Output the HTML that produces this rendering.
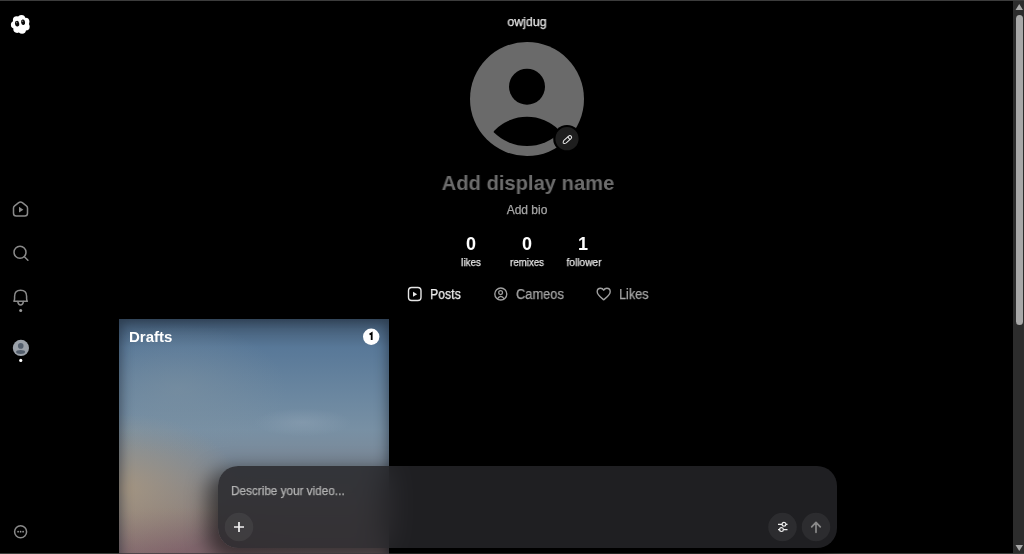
<!DOCTYPE html>
<html><head><meta charset="utf-8">
<style>
*{margin:0;padding:0;box-sizing:border-box}
html,body{width:1024px;height:554px;overflow:hidden;background:#000;font-family:"Liberation Sans",sans-serif;color:#ececec}
.abs{position:absolute}
#topline{left:0;top:0;width:1024px;height:1px;background:#3c3c3c}
#botline{left:0;top:553px;width:1024px;height:1px;background:#3a3d3a}
#sb{left:1013px;top:1px;width:11px;height:552px;background:#2c2c2c}
.t{position:absolute;white-space:nowrap;line-height:1;will-change:transform}
.c{transform:translateX(-50%)}
.rg{-webkit-text-stroke:0.25px currentColor}
</style></head><body>
<div class="abs" id="topline"></div>
<div class="abs" id="botline"></div>

<!-- scrollbar -->
<div class="abs" id="sb"></div>
<svg class="abs" style="left:1013px;top:0" width="11" height="554">
  <polygon points="2.5,10 10,10 6.25,4" fill="#a8a8a8"/>
  <rect x="3" y="15" width="7" height="310" rx="3.5" fill="#a8a8a8"/>
  <polygon points="2.5,545 10,545 6.25,551" fill="#a8a8a8"/>
</svg>

<!-- logo -->
<svg class="abs" style="left:0;top:0" width="40" height="40" viewBox="0 0 40 40">
  <g fill="#fff"><circle cx="20.5" cy="24.4" r="7.8"/><circle cx="21.51" cy="18.69" r="3.8"/><circle cx="25.59" cy="21.63" r="3.8"/><circle cx="25.84" cy="26.65" r="3.8"/><circle cx="22.07" cy="29.98" r="3.8"/><circle cx="17.11" cy="29.11" r="3.8"/><circle cx="14.71" cy="24.69" r="3.8"/><circle cx="16.66" cy="20.05" r="3.8"/></g>
  <ellipse cx="17.1" cy="23.7" rx="2.1" ry="2.85" fill="#0a0a0a" transform="rotate(-12 17.1 23.7)"/>
  <ellipse cx="23.1" cy="22.3" rx="2.0" ry="2.8" fill="#0a0a0a" transform="rotate(-12 23.1 22.3)"/>
  <circle cx="16.5" cy="22.6" r="0.8" fill="#777"/>
  <circle cx="22.5" cy="21.2" r="0.8" fill="#777"/>
</svg>
<!-- sidebar icons -->
<svg class="abs" style="left:0;top:190px" width="40" height="360" viewBox="0 190 40 360" fill="none" stroke="#8a8a8a" stroke-width="1.5" stroke-linecap="round" stroke-linejoin="round">
  <!-- home/play -->
  <path d="M18.7 202.7 Q20.5 201.3 22.3 202.7 L26.4 205.8 Q27.5 206.6 27.5 207.9 L27.5 213.2 Q27.5 216 24.7 216 L16.3 216 Q13.5 216 13.5 213.2 L13.5 207.9 Q13.5 206.6 14.6 205.8 Z"/>
  <path d="M19 206.8 L23.4 209.7 L19 212.6 Z" fill="#8a8a8a" stroke="none"/>
  <!-- search -->
  <circle cx="20" cy="252.3" r="6.0"/>
  <path d="M24.4 256.7 L27.9 260.2"/>
  <!-- bell -->
  <path d="M13.9 301.3 Q14.6 300.4 14.6 298.6 L14.6 296.3 Q14.6 290.3 20.6 290.3 Q26.6 290.3 26.6 296.3 L26.6 298.6 Q26.6 300.4 27.3 301.3 Z"/>
  <path d="M17.8 301.6 Q18.3 304.9 20.6 304.9 Q22.9 304.9 23.4 301.6"/>
  <circle cx="20.7" cy="310.6" r="1.5" fill="#999" stroke="none"/>
  <!-- more -->
  <circle cx="20.6" cy="531.7" r="6.0"/>
</svg>
<svg class="abs" style="left:0;top:330px" width="40" height="40" viewBox="0 330 40 40">
  <circle cx="20.9" cy="347.9" r="8.1" fill="#9aa0a8"/>
  <circle cx="20.75" cy="345.9" r="2.8" fill="#535e6c"/>
  <ellipse cx="20.6" cy="352" rx="4.5" ry="1.9" fill="#535e6c"/>
  <circle cx="20.75" cy="360.4" r="1.6" fill="#fff"/>
</svg>
<svg class="abs" style="left:0;top:520px" width="40" height="24" viewBox="0 520 40 24">
  <circle cx="18.1" cy="531.7" r="0.85" fill="#999"/><circle cx="20.6" cy="531.7" r="0.85" fill="#999"/><circle cx="23.1" cy="531.7" r="0.85" fill="#999"/>
</svg>

<!-- header -->
<div class="rg t c" style="left:527.2px;top:14.8px;font-size:13px;color:#e6e6e6;transform:translateX(-50%) scaleX(.95)">owjdug</div>

<!-- avatar -->
<svg class="abs" style="left:470.3px;top:42.4px" width="114" height="114" viewBox="-57 -57 114 114">
  <defs><clipPath id="inner"><circle cx="0" cy="0" r="47"/></clipPath></defs>
  <circle cx="0" cy="0" r="57" fill="#6a6a6a"/>
  <circle cx="0" cy="-12.3" r="18" fill="#000"/>
  <circle cx="0" cy="63.3" r="45.5" fill="#000" clip-path="url(#inner)"/>
</svg>
<!-- edit -->
<svg class="abs" style="left:550px;top:120px" width="34" height="36" viewBox="550 120 34 36">
  <circle cx="567" cy="138.7" r="13.8" fill="#000"/>
  <circle cx="567" cy="138.7" r="11.6" fill="#1e1e1e"/>
  <g transform="translate(563.3 143.2) rotate(-42)" fill="none" stroke="#eee" stroke-width="1" stroke-linejoin="round">
    <path d="M0 0 Q0.3 -1.2 2.4 -1.75 L8.8 -1.75 A1.75 1.75 0 0 1 8.8 1.75 L2.4 1.75 Q0.3 1.2 0 0 Z"/>
    <path d="M7.4 -1.75 V1.75"/>
  </g>
</svg>

<div class="t c" style="left:527.6px;top:172px;font-size:21px;font-weight:bold;color:#6c6c6c;transform:translateX(-50%) scaleX(.961)">Add display name</div>
<div class="rg t c" style="left:527px;top:204px;font-size:12px;color:#a6a6a6">Add bio</div>

<div class="t c" style="left:471px;top:235px;font-size:18px;font-weight:bold;color:#fff">0</div>
<div class="t c" style="left:527.3px;top:235px;font-size:18px;font-weight:bold;color:#fff">0</div>
<div class="t c" style="left:583px;top:235px;font-size:18px;font-weight:bold;color:#fff">1</div>
<div class="rg t c" style="left:471px;top:257px;font-size:11px;color:#e6e6e6;transform:translateX(-50%) scaleX(.9)">likes</div>
<div class="rg t c" style="left:527.3px;top:257px;font-size:11px;color:#e6e6e6;transform:translateX(-50%) scaleX(.88)">remixes</div>
<div class="rg t c" style="left:583.6px;top:257px;font-size:11px;color:#e6e6e6;transform:translateX(-50%) scaleX(.923)">follower</div>

<!-- tabs -->
<svg class="abs" style="left:400px;top:280px" width="260" height="30" viewBox="400 280 260 30" fill="none" stroke-width="1.4">
  <rect x="408.5" y="287.5" width="12.5" height="13" rx="3.2" stroke="#e6e6e6"/>
  <path d="M413 291.8 L417.2 294.3 L413 296.8Z" fill="#e6e6e6" stroke="none"/>
  <circle cx="500.8" cy="294" r="6.0" stroke="#a0a0a0" stroke-width="1.35"/>
  <circle cx="500.6" cy="292.6" r="1.9" stroke="#a0a0a0" stroke-width="1.25"/>
  <path d="M497.1 299.3 Q500.8 293.2 504.5 299.3" stroke="#a0a0a0" stroke-width="1.25"/>
  <path d="M603.7 299.8 C601.4 297.9 597.2 294.9 597.2 291.7 C597.2 289.6 598.7 288.2 600.6 288.2 C601.9 288.2 603 288.9 603.7 290.2 C604.4 288.9 605.5 288.2 606.8 288.2 C608.7 288.2 610.2 289.6 610.2 291.7 C610.2 294.9 606 297.9 603.7 299.8 Z" stroke="#a0a0a0" stroke-width="1.4" stroke-linejoin="round"/>
</svg>
<div class="rg t" style="left:429.7px;top:287px;font-size:14px;color:#ececec;transform-origin:0 0;transform:scaleX(.88)">Posts</div>
<div class="rg t" style="left:515.7px;top:287px;font-size:14px;color:#a5a5a5;transform-origin:0 0;transform:scaleX(.917)">Cameos</div>
<div class="rg t" style="left:619px;top:287px;font-size:14px;color:#a5a5a5;transform-origin:0 0;transform:scaleX(.9)">Likes</div>

<!-- drafts card -->
<div class="abs" id="card" style="left:119px;top:319px;width:270px;height:235px;overflow:hidden;background:#000">
  <div class="abs" style="left:0;top:0;width:270px;height:235px;
    background:
      radial-gradient(ellipse 18% 6% at 68% 44%, rgba(160,176,192,.3), rgba(160,176,192,0)),
      radial-gradient(ellipse 40% 28% at 22% 30%, rgba(125,145,160,.55), rgba(125,145,160,0)),
      radial-gradient(ellipse 45% 32% at 0% 72%, rgba(170,152,128,.85), rgba(170,152,128,0)),
      radial-gradient(ellipse 50% 20% at 20% 100%, rgba(128,98,106,.9), rgba(128,98,106,0)),
      linear-gradient(180deg,#3f566e 0%,#587898 12%,#6b87a0 33%,#7890a4 47%,#7b8896 62%,#857c7c 82%,#7e6c70 100%)"></div>
  <div class="abs" style="left:0;top:0;width:270px;height:260px;box-shadow:inset 0 0 11px 3px rgba(25,35,50,.5)"></div>
</div>
<div class="t" style="left:129px;top:329px;font-size:15px;font-weight:bold;color:#fff">Drafts</div>
<svg class="abs" style="left:362px;top:328px" width="18" height="18" viewBox="0 0 18 18">
  <circle cx="9.2" cy="8.8" r="8.2" fill="#fff"/>
  <path d="M7.5 6.5 L9.7 5.2 L9.7 12" fill="none" stroke="#000" stroke-width="1.8"/>
</svg>

<!-- composer -->
<div class="abs" style="left:218px;top:466px;width:618.5px;height:81.5px;border-radius:20px;background:rgba(37,37,40,.84);backdrop-filter:blur(16px);box-shadow:-7px 8px 20px 4px rgba(0,0,0,.55)"></div>
<div class="rg t" style="left:231.3px;top:485px;font-size:12.5px;color:#b3b3b3;transform-origin:0 0;transform:scaleX(.94)">Describe your video...</div>
<svg class="abs" style="left:218px;top:466px" width="619" height="82" viewBox="218 466 619 82">
  <circle cx="239" cy="527" r="14.3" fill="rgba(255,255,255,.06)"/>
  <path d="M239 522 V532 M234 527 H244" stroke="#f2f2f2" stroke-width="1.7"/>
  <circle cx="782.5" cy="527" r="14.3" fill="rgba(255,255,255,.06)"/>
  <circle cx="816" cy="527" r="14.3" fill="rgba(255,255,255,.06)"/>
  <path d="M816 532.3 V522.6 M811.7 526.8 L816 522.3 L820.3 526.8" stroke="#8a8a8a" stroke-width="1.7" fill="none" stroke-linecap="round" stroke-linejoin="round"/>
  <g stroke="#eee" stroke-width="1.2" fill="none">
    <path d="M778 524.3 H782 M786 524.3 H787.5"/>
    <circle cx="784" cy="524.3" r="1.9"/>
    <path d="M778 529.6 H779.5 M783.5 529.6 H787.5"/>
    <circle cx="781.5" cy="529.6" r="1.9"/>
  </g>
</svg>
<div class="abs" style="left:119px;top:553px;width:270px;height:1px;background:rgba(60,55,60,.7)"></div>
</body></html>
